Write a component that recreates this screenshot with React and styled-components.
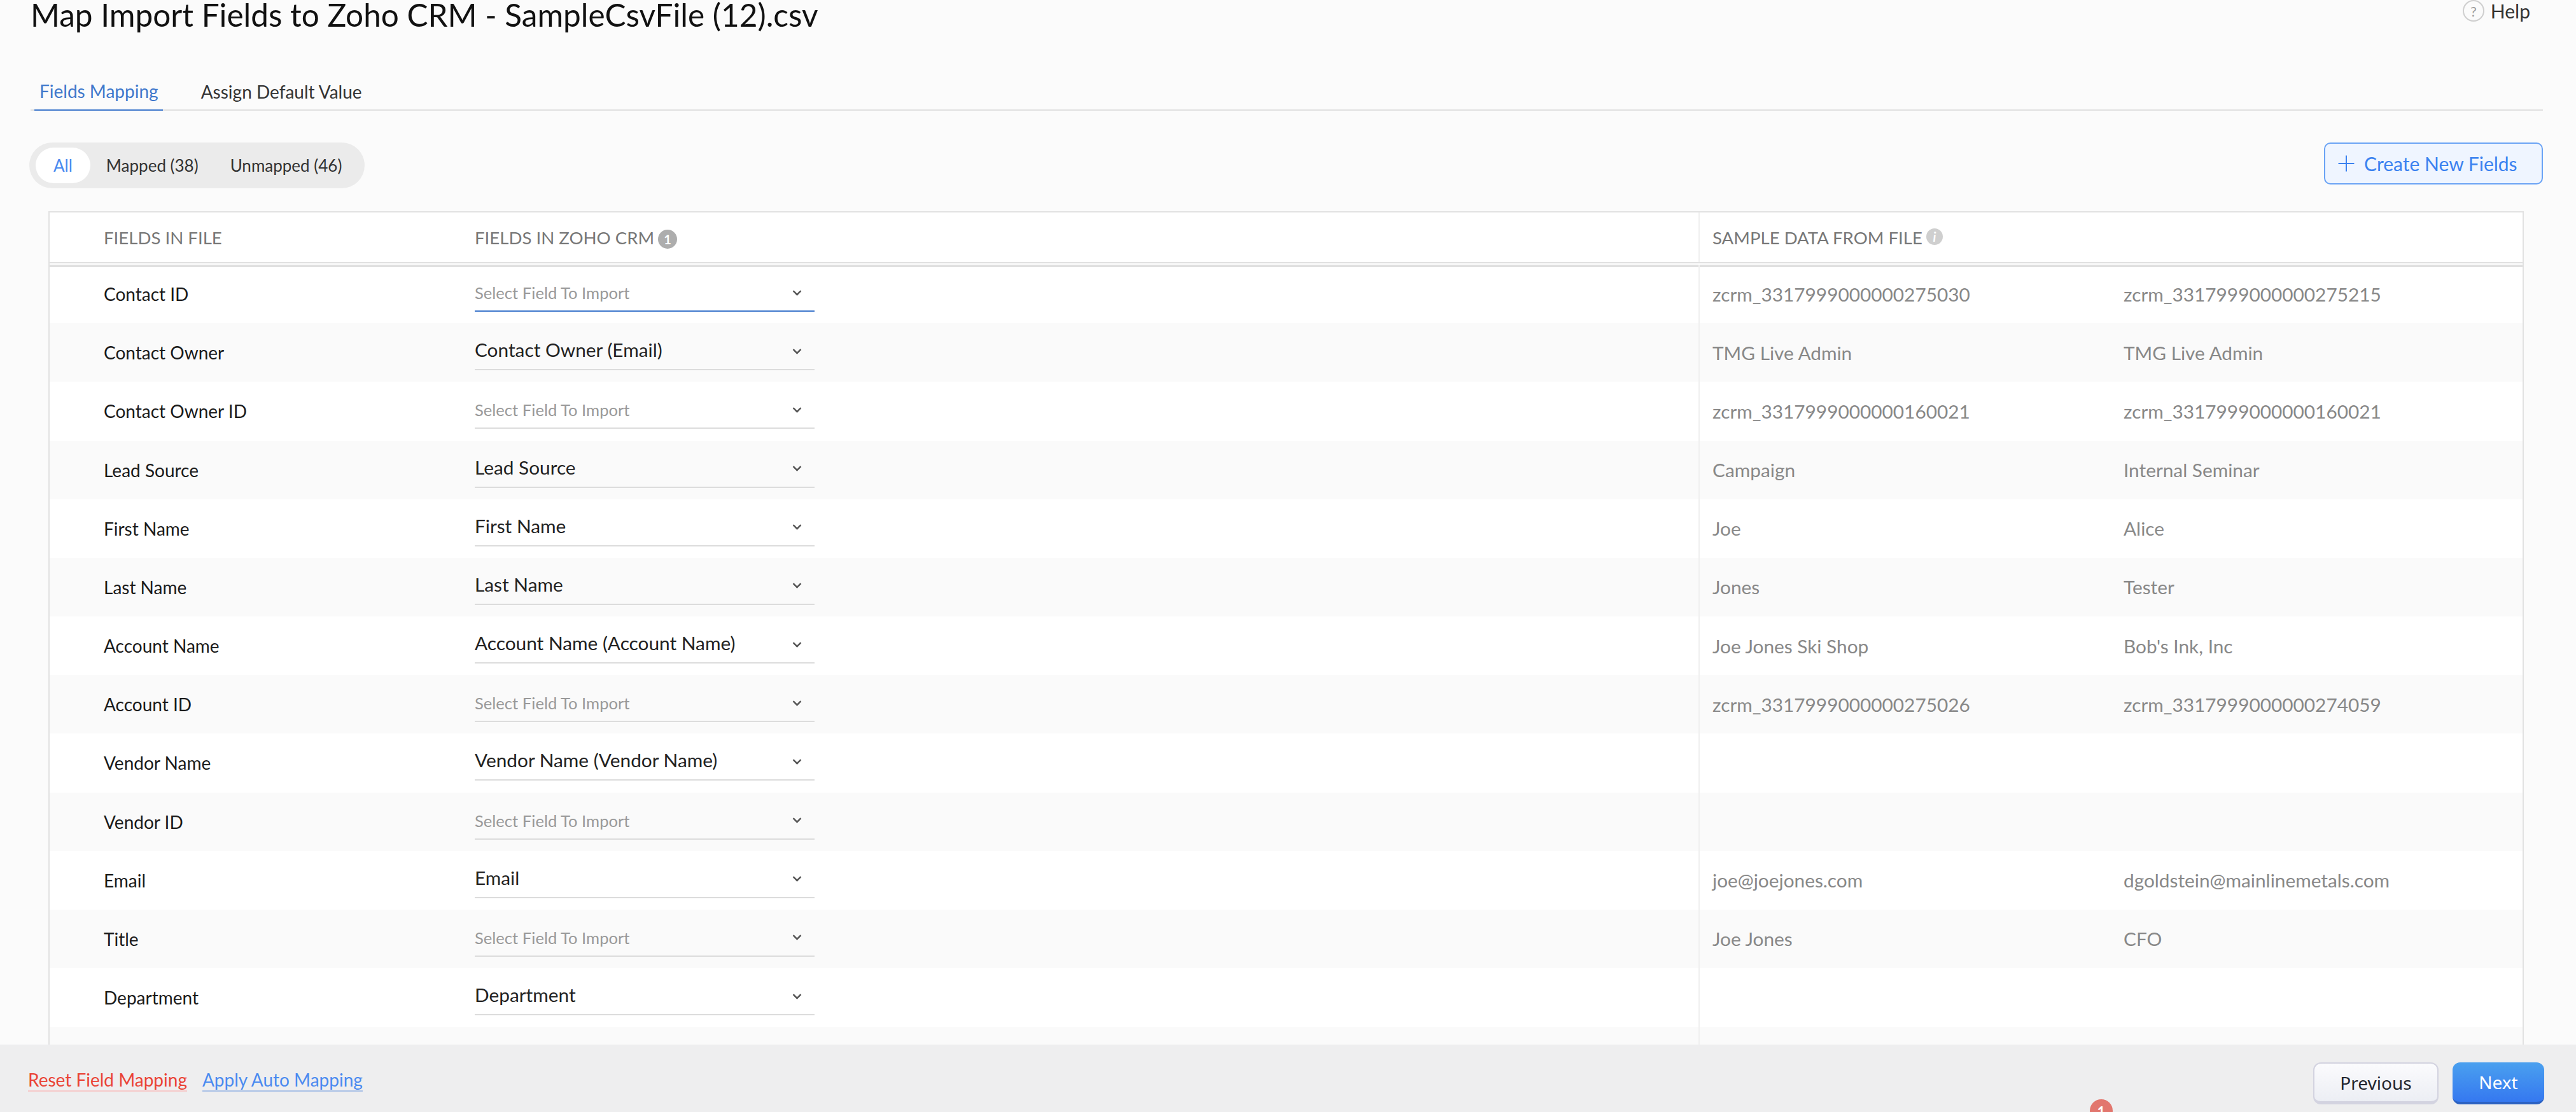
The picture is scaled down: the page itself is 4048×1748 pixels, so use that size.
import React from "react";
import styled, { createGlobalStyle } from "styled-components";
import { FiPlus } from "react-icons/fi";

const GlobalStyle = createGlobalStyle`
  html, body {
    margin: 0;
    padding: 0;
    background: #fbfbfb;
    font-family: Lato, "Noto Sans", sans-serif;
  }
  * {
    box-sizing: border-box;
  }
`;

const rows = [
  { label: "Contact ID", value: "", a: "zcrm_3317999000000275030", b: "zcrm_3317999000000275215", focused: true },
  { label: "Contact Owner", value: "Contact Owner (Email)", a: "TMG Live Admin", b: "TMG Live Admin" },
  { label: "Contact Owner ID", value: "", a: "zcrm_3317999000000160021", b: "zcrm_3317999000000160021" },
  { label: "Lead Source", value: "Lead Source", a: "Campaign", b: "Internal Seminar" },
  { label: "First Name", value: "First Name", a: "Joe", b: "Alice" },
  { label: "Last Name", value: "Last Name", a: "Jones", b: "Tester" },
  { label: "Account Name", value: "Account Name (Account Name)", a: "Joe Jones Ski Shop", b: "Bob's Ink, Inc" },
  { label: "Account ID", value: "", a: "zcrm_3317999000000275026", b: "zcrm_3317999000000274059" },
  { label: "Vendor Name", value: "Vendor Name (Vendor Name)", a: "", b: "" },
  { label: "Vendor ID", value: "", a: "", b: "" },
  { label: "Email", value: "Email", a: "joe@joejones.com", b: "dgoldstein@mainlinemetals.com" },
  { label: "Title", value: "", a: "Joe Jones", b: "CFO" },
  { label: "Department", value: "Department", a: "", b: "" },
];

export default function App() {
  return (
    <Page>
      <GlobalStyle />
      <Content>
        <TitleBar>
          <Title>Map Import Fields to Zoho CRM - SampleCsvFile (12).csv</Title>
          <Help>
            <HelpIcon>?</HelpIcon>
            Help
          </Help>
        </TitleBar>
        <Tabs>
          <Tab $active>Fields Mapping</Tab>
          <Tab>Assign Default Value</Tab>
        </Tabs>
        <Toolbar>
          <Pills>
            <Pill $active>All</Pill>
            <Pill>Mapped (38)</Pill>
            <Pill>Unmapped (46)</Pill>
          </Pills>
          <CreateButton>
            <FiPlus />
            Create New Fields
          </CreateButton>
        </Toolbar>
        <Table>
          <HeadRow>
            <HeadCell>FIELDS IN FILE</HeadCell>
            <HeadCell>
              FIELDS IN ZOHO CRM <InfoBadge>1</InfoBadge>
            </HeadCell>
            <HeadCell>
              SAMPLE DATA FROM FILE <InfoBadge $light>i</InfoBadge>
            </HeadCell>
            <HeadCell />
          </HeadRow>
          {rows.map((row) => (
            <Row key={row.label}>
              <Label>{row.label}</Label>
              <SelectCell>
                <Select $focused={row.focused}>
                  <SelectText $empty={!row.value}>{row.value || "Select Field To Import"}</SelectText>
                  <Chevron viewBox="0 0 15 9">
                    <path d="M1.5 1.2l6 6 6-6" />
                  </Chevron>
                </Select>
              </SelectCell>
              <Sample $first>{row.a}</Sample>
              <Sample>{row.b}</Sample>
            </Row>
          ))}
          <Row>
            <Label />
            <SelectCell />
            <Sample $first />
            <Sample />
          </Row>
        </Table>
      </Content>
      <Footer>
        <FooterLinks>
          <FooterLink $color="#ea4335" $line="#f6c9c9">Reset Field Mapping</FooterLink>
          <FooterLink $color="#4a8af0" $line="#a9c1e6">Apply Auto Mapping</FooterLink>
        </FooterLinks>
        <FooterButtons>
          <PrevButton>Previous</PrevButton>
          <NextButton>Next</NextButton>
        </FooterButtons>
        <Notification>1</Notification>
      </Footer>
    </Page>
  );
}

const Page = styled.div`
  position: relative;
  display: flex;
  flex-direction: column;
  height: 1748px;
  overflow: hidden;
  background: #fbfbfb;
`;

const Content = styled.div`
  flex: 1;
  min-height: 0;
  overflow: hidden;
`;

const TitleBar = styled.div`
  display: flex;
  justify-content: space-between;
  align-items: flex-start;
  height: 104px;
  padding: 0 72px 0 48px;
`;

const Title = styled.h1`
  margin: 0;
  font-size: 49.5px;
  font-weight: 400;
  line-height: 46px;
  color: #111;
`;

const Help = styled.div`
  display: flex;
  align-items: center;
  gap: 10px;
  height: 34px;
  font-size: 30px;
  color: #333;
`;

const HelpIcon = styled.span`
  display: flex;
  align-items: center;
  justify-content: center;
  width: 34px;
  height: 34px;
  border: 2px solid #cfcfcf;
  border-radius: 50%;
  font-size: 22px;
  color: #9a9a9a;
`;

const Tabs = styled.div`
  display: flex;
  height: 70px;
  margin: 0 52px 0 48px;
  border-bottom: 2px solid #e0e0e0;
`;

const Tab = styled.div`
  display: flex;
  align-items: center;
  height: 70px;
  padding: 10px 7px 0 8px;
  margin: 0 46px 0 6px;
  font-size: 28px;
  color: ${(p) => (p.$active ? "#3f78cc" : "#333")};
  border-bottom: ${(p) => (p.$active ? "2px solid #3f78cc" : "none")};
`;

const Toolbar = styled.div`
  display: flex;
  justify-content: space-between;
  align-items: flex-start;
  height: 158px;
  padding: 50px 52px 0 46px;
`;

const Pills = styled.div`
  display: flex;
  align-items: center;
  height: 72px;
  padding: 0 11px 0 10px;
  border-radius: 36px;
  background: #ebebeb;
`;

const Pill = styled.div`
  display: flex;
  align-items: center;
  height: 56px;
  padding: ${(p) => (p.$active ? "0 28px" : "0 25px")};
  border-radius: 28px;
  background: ${(p) => (p.$active ? "#fff" : "transparent")};
  font-size: 26px;
  color: ${(p) => (p.$active ? "#4a8af0" : "#333")};
`;

const CreateButton = styled.button`
  display: flex;
  align-items: center;
  gap: 8px;
  width: 344px;
  height: 66px;
  padding: 0 0 0 13px;
  border: 2px solid #6aa3f5;
  border-radius: 10px;
  background: #eff5ff;
  font-family: inherit;
  font-size: 30px;
  color: #3b82f0;
  svg {
    width: 40px;
    height: 40px;
    stroke-width: 1.2;
  }
`;

const Table = styled.div`
  width: 3890px;
  margin-left: 76px;
  border: 2px solid #e2e2e2;
  border-width: 2px 2px 0;
  background: #fff;
`;

const columns = "668px 1923px 648px 1fr";

const HeadRow = styled.div`
  display: grid;
  grid-template-columns: ${columns};
  height: 80px;
  margin-bottom: 2px;
  border-bottom: 2px solid #e0e0e0;
`;

const HeadCell = styled.div`
  display: flex;
  align-items: center;
  gap: 6px;
  font-size: 27.6px;
  color: #777;
  &:first-child {
    padding-left: 85px;
  }
  &:nth-child(3) {
    padding-left: 20px;
    border-left: 2px solid #f0f0f0;
  }
`;

const InfoBadge = styled.span`
  display: inline-flex;
  align-items: center;
  justify-content: center;
  width: ${(p) => (p.$light ? "26px" : "30px")};
  height: ${(p) => (p.$light ? "26px" : "30px")};
  margin-top: ${(p) => (p.$light ? "-2px" : "6px")};
  border-radius: 50%;
  background: ${(p) => (p.$light ? "#cfcfcf" : "#adadad")};
  font-size: 20px;
  font-weight: 700;
  font-style: ${(p) => (p.$light ? "italic" : "normal")};
  color: #fff;
`;

const Row = styled.div`
  display: grid;
  grid-template-columns: ${columns};
  height: 92.18px;
  background: #fff;
  &:nth-child(odd) {
    background: #fafafa;
  }
  &:nth-child(2) {
    box-shadow: inset 0 4px 0 #e0e0e0;
  }
`;

const Label = styled.div`
  display: flex;
  align-items: center;
  padding-left: 85px;
  font-size: 28px;
  color: #1a1a1a;
`;

const SelectCell = styled.div`
  padding-top: 10px;
`;

const Select = styled.div`
  display: flex;
  align-items: center;
  justify-content: space-between;
  width: 534px;
  height: 64px;
  padding: 6px 20px 0 0;
  border-bottom: 2px solid ${(p) => (p.$focused ? "#3f78cc" : "#dcdcdc")};
`;

const SelectText = styled.span`
  margin-bottom: ${(p) => (p.$empty ? "0" : "5px")};
  font-size: ${(p) => (p.$empty ? "25.6px" : "29.8px")};
  color: ${(p) => (p.$empty ? "#999" : "#222")};
`;

const Chevron = styled.svg`
  width: 15px;
  height: 9px;
  fill: none;
  stroke: #555;
  stroke-width: 2.4;
`;

const Sample = styled.div`
  display: flex;
  align-items: center;
  padding-left: 20px;
  font-size: 29.8px;
  color: #888;
  border-left: ${(p) => (p.$first ? "2px solid #f0f0f0" : "none")};
`;

const Footer = styled.div`
  position: relative;
  display: flex;
  justify-content: space-between;
  align-items: flex-start;
  height: 106px;
  padding: 28px 50px 0 44px;
  background: #eeeeef;
`;

const FooterLinks = styled.div`
  display: flex;
  gap: 24px;
  padding-top: 10px;
`;

const FooterLink = styled.a`
  font-size: 28px;
  line-height: 34px;
  color: ${(p) => p.$color};
  border-bottom: 2px solid ${(p) => p.$line};
`;

const FooterButtons = styled.div`
  display: flex;
  gap: 22px;
`;

const PrevButton = styled.button`
  width: 197px;
  height: 66px;
  border: 2px solid #d3d3e0;
  border-bottom-width: 5px;
  border-radius: 12px;
  background: linear-gradient(#fbfbfd, #eceef4);
  font-family: "Noto Sans", sans-serif;
  font-size: 28px;
  color: #22252e;
`;

const NextButton = styled.button`
  width: 144px;
  height: 66px;
  border: none;
  border-bottom: 4px solid #2c62c2;
  border-radius: 12px;
  background: linear-gradient(#4aa0ef, #3578f0);
  font-family: "Noto Sans", sans-serif;
  font-size: 28px;
  color: #fff;
`;

const Notification = styled.span`
  position: absolute;
  left: 3284px;
  top: 86px;
  display: flex;
  justify-content: center;
  width: 36px;
  height: 36px;
  padding-top: 6px;
  border-radius: 50%;
  background: #e2766e;
  font-size: 22px;
  font-weight: 700;
  color: #fff;
`;
